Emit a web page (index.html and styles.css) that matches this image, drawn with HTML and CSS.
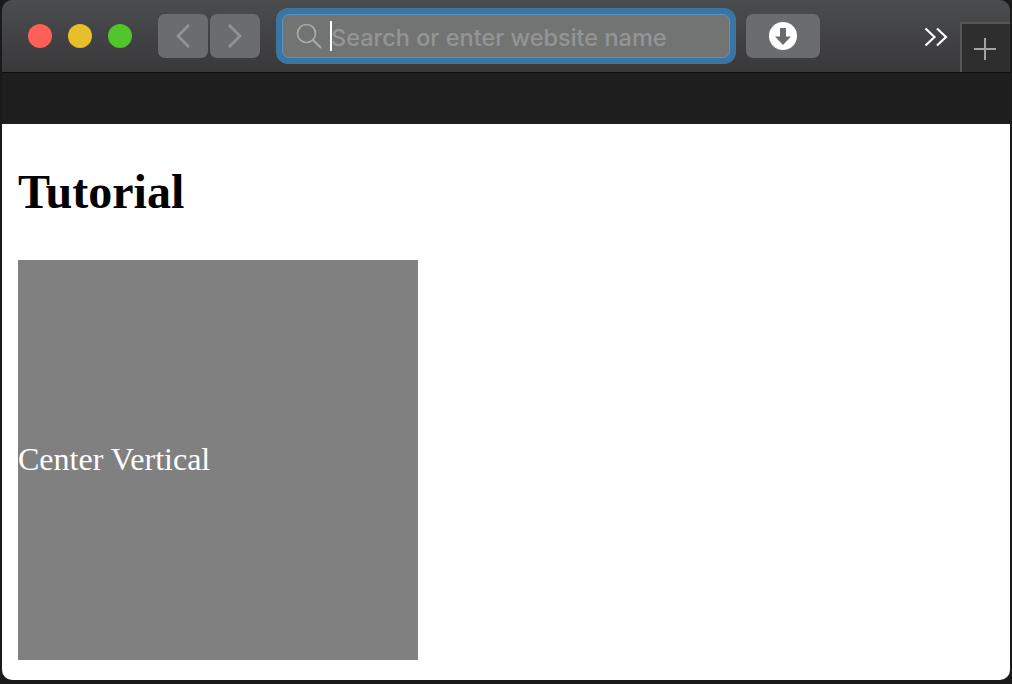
FILE: index.html
```html
<!DOCTYPE html>
<html lang="en">
<head>
    <meta charset="UTF-8">
    <title>Tutorial</title>
    <link rel="stylesheet" href="styles.css">
</head>
<body>
    <div class="window">
        <div class="toolbar">
            <div class="lights">
                <span class="light red"></span>
                <span class="light yellow"></span>
                <span class="light green"></span>
            </div>
            <div class="nav">
                <button class="tool-button nav-button">
                    <svg width="16" height="26" viewBox="0 0 16 26"><path d="M14 2 3 13l11 11" fill="none" stroke="#939495" stroke-width="2.6"/></svg>
                </button>
                <button class="tool-button nav-button">
                    <svg width="16" height="26" viewBox="0 0 16 26"><path d="M2 2l11 11L2 24" fill="none" stroke="#939495" stroke-width="2.6"/></svg>
                </button>
            </div>
            <div class="address-ring">
                <div class="address">
                    <svg class="search-icon" width="26" height="26" viewBox="0 0 26 26"><circle cx="10.5" cy="10.5" r="9" fill="none" stroke="#a9aaaa" stroke-width="1.7"/><path d="M17 17l8 8" fill="none" stroke="#a9aaaa" stroke-width="2"/></svg>
                    <span class="caret"></span>
                    <span class="placeholder">Search or enter website name</span>
                </div>
            </div>
            <button class="tool-button download-button">
                <svg width="28" height="28" viewBox="0 0 28 28"><circle cx="14" cy="14" r="14" fill="#fff"/><path d="M11 6h6v8.500h5L14 23 6 14.500h5z" fill="#6a6b6c"/></svg>
            </button>
            <div class="toolbar-end">
                <svg class="more-icon" width="24" height="20" viewBox="0 0 24 20"><path d="M1.500 1.500 10.500 10l-9 8.500M13 1.500 22 10l-9 8.500" fill="none" stroke="#fff" stroke-width="2.200"/></svg>
                <div class="new-tab">
                    <svg width="24" height="24" viewBox="0 0 24 24"><path d="M12 1v22M1 12h22" fill="none" stroke="#a3a3a3" stroke-width="2"/></svg>
                </div>
            </div>
        </div>
        <div class="tab-strip"></div>
        <div class="page">
            <h1 class="title">Tutorial</h1>
            <div class="box">Center Vertical</div>
        </div>
    </div>
</body>
</html>
```

FILE: styles.css
```css
html, body {
    height: 100%;
}
body {
    margin: 0;
    background-color: #1a1a1a;
    overflow: hidden;
}
.window {
    display: flex;
    flex-direction: column;
    width: 1008px;
    height: 680px;
    margin-left: 2px;
    border-radius: 10px;
    overflow: hidden;
}
.toolbar {
    display: flex;
    align-items: flex-start;
    height: 72px;
    padding: 8px 0 0 26px;
    box-sizing: border-box;
    background: linear-gradient(#4b4c4e, #39393b);
}
.lights {
    display: flex;
    gap: 16px;
    margin-top: 16px;
}
.light {
    width: 24px;
    height: 24px;
    border-radius: 50%;
}
.red { background-color: #fe5f57; }
.yellow { background-color: #e9bf29; }
.green { background-color: #52c42c; }
.nav {
    display: flex;
    gap: 2px;
    margin: 6px 0 0 26px;
}
.tool-button {
    display: flex;
    align-items: center;
    justify-content: center;
    height: 44px;
    padding: 0;
    border: none;
    border-radius: 7px;
    background-color: #6b6c6d;
}
.nav-button {
    width: 50px;
}
.address-ring {
    margin-left: 16px;
    padding: 6px;
    border-radius: 12px;
    background-color: #3b75a6;
}
.address {
    display: flex;
    align-items: center;
    width: 448px;
    height: 44px;
    box-sizing: border-box;
    padding-left: 13px;
    border: 1px solid #5c93c2;
    border-radius: 7px;
    background-color: #727373;
}
.search-icon {
    flex: none;
    margin-right: 8px;
}
.caret {
    flex: none;
    width: 2px;
    height: 30px;
    background-color: #fff;
}
.placeholder {
    margin: 2px 0 0 -1px;
    font-family: Inter, sans-serif;
    font-size: 23.5px;
    font-weight: 500;
    color: #949595;
    white-space: nowrap;
}
.download-button {
    width: 74px;
    margin: 6px 0 0 10px;
}
.toolbar-end {
    display: flex;
    align-items: flex-start;
    margin-left: auto;
}
.more-icon {
    margin: 19px 12px 0 0;
}
.new-tab {
    display: flex;
    align-items: center;
    justify-content: center;
    width: 50px;
    height: 50px;
    margin-top: 14px;
    padding: 2px 2px 0 0;
    border-top: 2px solid #565657;
    border-left: 2px solid #565657;
    box-sizing: border-box;
    background-color: #2e2e2f;
}
.tab-strip {
    height: 52px;
    border-top: 1px solid #0c0c0c;
    box-sizing: border-box;
    background-color: #1e1e1e;
}
.page {
    flex: 1;
    padding: 0 16px;
    background-color: #fff;
}
.title {
    margin: 41px 0 41px;
    font-family: "Liberation Serif", serif;
    font-size: 48px;
    line-height: 54px;
    color: #000;
}
.box {
    display: flex;
    align-items: center;
    width: 400px;
    height: 400px;
    padding-bottom: 2px;
    box-sizing: border-box;
    background-color: #808080;
    font-family: "Liberation Serif", serif;
    font-size: 32px;
    color: #fff;
}
```
